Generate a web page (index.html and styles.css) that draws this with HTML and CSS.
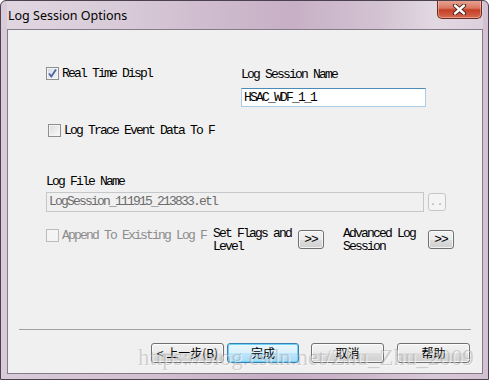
FILE: index.html
```html
<!DOCTYPE html>
<html lang="en">
<head>
    <meta charset="UTF-8">
    <title>Log Session Options</title>
    <link rel="stylesheet" href="styles.css">
</head>
<body>
    <div class="window">
        <div class="titlebar">
            <span class="title">Log Session Options</span>
            <div class="close">
                <svg width="17" height="11" viewBox="0 0 17 11">
                    <path d="M4 1.5 L13 9.5 M13 1.5 L4 9.5" stroke="#3a1a16" stroke-width="4.2" stroke-linecap="round"/>
                    <path d="M4 1.5 L13 9.5 M13 1.5 L4 9.5" stroke="#ffffff" stroke-width="2.4" stroke-linecap="round"/>
                </svg>
            </div>
        </div>

        <div class="client">
            <div class="session-row">
                <div class="col-left">
                    <label class="check">
                        <span class="box checked">
                            <svg width="11" height="11" viewBox="0 0 11 11">
                                <path d="M2 5.5 L4.3 8.5 L9 1.5" fill="none" stroke="#4b62a0" stroke-width="1.8"/>
                            </svg>
                        </span>
                        <span class="check-text">Real Time Displ</span>
                    </label>
                </div>
                <div class="col-right">
                    <div class="field-label">Log Session Name</div>
                    <div class="textbox focused">HSAC_WDF_1_1</div>
                </div>
            </div>

            <label class="check trace">
                <span class="box"></span>
                <span class="check-text">Log Trace Event Data To F</span>
            </label>

            <div class="field-label file-label">Log File Name</div>
            <div class="file-row">
                <div class="textbox disabled">LogSession_111915_213833.etl</div>
                <div class="browse">..</div>
            </div>

            <div class="options-row">
                <label class="check append disabled">
                    <span class="box"></span>
                    <span class="check-text">Append To Existing Log F</span>
                </label>
                <div class="option-text">Set Flags and<br>Level</div>
                <div class="arrow-btn">&gt;&gt;</div>
                <div class="option-text advanced">Advanced Log<br>Session</div>
                <div class="arrow-btn">&gt;&gt;</div>
            </div>

            <div class="footer">
                <div class="separator"></div>
                <div class="buttons">
                    <div class="btn back">&lt; 上一步(B)</div>
                    <div class="btn default">完成</div>
                    <div class="btn cancel">取消</div>
                    <div class="btn help">帮助</div>
                </div>
            </div>
        </div>

        <div class="watermark">https://blog.csdn.net/Zhu_Zhu_2009</div>
    </div>
</body>
</html>
```

FILE: styles.css
```css
body {
    margin: 0;
    background-color: #ffffff;
}

.window {
    position: relative;
    width: 489px;
    height: 380px;
    box-sizing: border-box;
    border: 1px solid #4b4150;
    border-radius: 6px 6px 0 0;
    padding: 0 5px 5px 6px;
    display: flex;
    flex-direction: column;
    background: linear-gradient(90deg, #d9cbd9 0%, #d2c0d1 30%, #c6afc4 55%, #cbb5c9 72%, #d8c9d7 88%, #d3c1d2 100%);
    overflow: hidden;
}

.titlebar {
    height: 28px;
    display: flex;
    justify-content: space-between;
    align-items: flex-start;
    padding-left: 1px;
    padding-right: 1px;
    background: linear-gradient(90deg, #e0d6e0 0%, #d8cad8 25%, #cbb6ca 50%, #c7b0c6 60%, #d3c3d2 78%, #e2d8e2 90%, #dcd0dc 100%);
}

.title {
    font-family: "Noto Sans", sans-serif;
    font-size: 12.5px;
    line-height: 18px;
    margin-top: 6px;
    color: #000000;
}

.close {
    width: 45px;
    height: 19px;
    box-sizing: border-box;
    margin-top: -1px;
    border: 1px solid #6b2a22;
    border-top: none;
    border-radius: 0 0 5px 5px;
    background: linear-gradient(180deg, #e8a796 0%, #d97762 45%, #c53e26 55%, #d4694f 100%);
    display: flex;
    align-items: center;
    justify-content: center;
    box-shadow: inset 0 0 0 1px rgba(255, 220, 210, 0.45);
}

.client {
    flex: 1;
    display: flex;
    flex-direction: column;
    border: 1px solid #857a88;
    background-color: #f0f0f0;
    font-family: "Liberation Mono", "Courier New", "Nimbus Mono PS", "FreeMono", monospace;
    font-size: 13px;
    line-height: 13px;
    letter-spacing: -1.8px;
    color: #000000;
}

.session-row {
    display: flex;
    margin-top: 37px;
    padding-left: 38px;
}

.col-left {
    width: 195px;
}

.col-right {
    width: 185px;
}

.field-label {
    margin-top: 1px;
}

.check {
    display: flex;
    align-items: center;
    gap: 3px;
    height: 13px;
    white-space: nowrap;
    overflow: hidden;
}

.box {
    width: 13px;
    height: 13px;
    flex: none;
    box-sizing: border-box;
    border: 1px solid #8e8f8f;
    background: linear-gradient(135deg, #dcdcdc 0%, #f4f4f4 80%);
    box-shadow: inset 0 0 0 1px #f4f4f4;
    display: flex;
    align-items: center;
    justify-content: center;
}

.box.checked {
    background: linear-gradient(135deg, #d4d9e4 0%, #eef0f6 80%);
}

.check.disabled .box {
    border-color: #bcbcbc;
    background: #f4f4f4;
}

.check.disabled .check-text {
    color: #8d8d8d;
}

.check.trace {
    margin-top: 17px;
    padding-left: 40px;
}

.textbox {
    height: 19px;
    box-sizing: border-box;
    padding-left: 2px;
    line-height: 17px;
    white-space: nowrap;
    overflow: hidden;
}

.textbox.focused {
    margin-top: 7px;
    width: 185px;
    border: 1px solid #a9cde6;
    border-top-color: #4c8ab8;
    background-color: #ffffff;
}

.file-label {
    margin-top: 38px;
    padding-left: 38px;
}

.file-row {
    display: flex;
    align-items: center;
    gap: 4px;
    margin-top: 4px;
    padding-left: 38px;
}

.textbox.disabled {
    width: 378px;
    height: 20px;
    line-height: 18px;
    border: 1px solid #c5c8cb;
    background-color: #f0f0f0;
    color: #6d6d6d;
}

.browse {
    width: 18px;
    height: 18px;
    box-sizing: border-box;
    border: 1px solid #c6c6c6;
    border-radius: 3px;
    background-color: #f4f4f4;
    color: #a0a0a0;
    font-size: 10px;
    line-height: 18px;
    letter-spacing: 1px;
    text-align: center;
}

.options-row {
    display: flex;
    align-items: flex-start;
    margin-top: 17px;
    padding-left: 38px;
}

.check.append {
    width: 167px;
}

.option-text {
    width: 85px;
    margin-top: -2px;
    line-height: 13px;
    white-space: nowrap;
}

.option-text.advanced {
    margin-left: 19px;
}

.arrow-btn {
    width: 26px;
    height: 19px;
    box-sizing: border-box;
    margin-top: 1px;
    border: 1px solid #707070;
    border-radius: 3px;
    background: linear-gradient(180deg, #f2f2f2 0%, #ebebeb 50%, #dddddd 51%, #cfcfcf 100%);
    box-shadow: inset 0 0 0 1px rgba(255, 255, 255, 0.7);
    line-height: 17px;
    text-align: center;
    letter-spacing: -1px;
}

.footer {
    margin-top: auto;
    padding-bottom: 10px;
}

.separator {
    margin: 0 11px;
    border-top: 1px solid #a0a0a0;
}

.buttons {
    display: flex;
    margin-top: 13px;
    padding-left: 143px;
}

.btn {
    width: 73px;
    height: 20px;
    box-sizing: border-box;
    border: 1px solid #707070;
    border-radius: 3px;
    background: linear-gradient(180deg, #f2f2f2 0%, #ebebeb 50%, #dddddd 51%, #cfcfcf 100%);
    box-shadow: inset 0 0 0 1px rgba(255, 255, 255, 0.75);
    font-family: "Noto Sans CJK SC", sans-serif;
    font-size: 12px;
    line-height: 18px;
    letter-spacing: 0;
    text-align: center;
    color: #000000;
}

.btn.default {
    width: 72px;
    margin-left: 3px;
    border-color: #3c7fb1;
    background: linear-gradient(180deg, #eaf6fd 0%, #d9f0fc 50%, #bee6fd 51%, #a7d9f5 100%);
    box-shadow: inset 0 0 0 1px #6fd3f8;
}

.btn.cancel {
    margin-left: 12px;
}

.btn.help {
    margin-left: 13px;
}

.watermark {
    position: absolute;
    left: 137px;
    top: 345px;
    font-family: "Liberation Serif", serif;
    font-size: 23px;
    line-height: 23px;
    color: rgba(140, 140, 140, 0.35);
    text-shadow: 1px 1px 0 rgba(255, 255, 255, 0.5);
    white-space: nowrap;
    pointer-events: none;
}
```
